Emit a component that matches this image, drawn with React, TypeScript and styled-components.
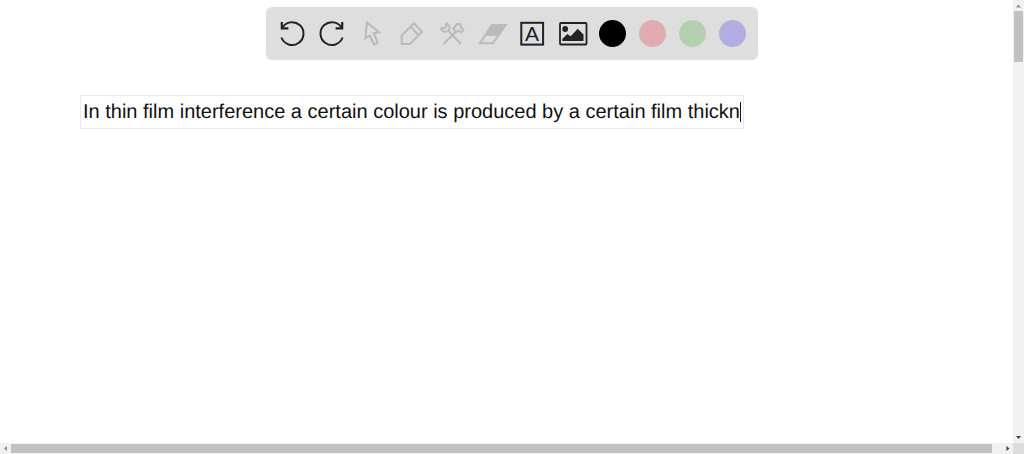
import React, { useState } from "react";
import styled, { createGlobalStyle } from "styled-components";

const GlobalStyle = createGlobalStyle`
  * { box-sizing: border-box; }
  body {
    margin: 0;
    background: #fff;
    font-family: "Liberation Sans", Arial, sans-serif;
    overflow: hidden;
  }
`;

const Page = styled.div`
  display: grid;
  grid-template-columns: minmax(0, 1fr) 11px;
  grid-template-rows: minmax(0, 1fr) 11px;
  height: 100vh;
`;

const Toolbar = styled.div`
  grid-area: 1 / 1 / 2 / 3;
  justify-self: center;
  align-self: start;
  z-index: 1;
  display: flex;
  margin-top: 7px;
  padding: 0 6px;
  border-radius: 6px;
  background: #dedede;
`;

const ToolButton = styled.button<{ $muted?: boolean }>`
  display: flex;
  align-items: center;
  justify-content: center;
  width: 40px;
  height: 53px;
  padding: 0;
  border: 0;
  background: none;
  color: ${(p) => (p.$muted ? "#bababa" : "#202224")};
  cursor: pointer;
`;

const Icon = styled.svg`
  display: block;
  width: 40px;
  height: 53px;
  fill: none;
  stroke: currentColor;
  stroke-width: 2;
`;

const Letter = styled.text`
  font: 21px "Liberation Sans", Arial, sans-serif;
  fill: currentColor;
  stroke: none;
  text-anchor: middle;
`;

const Swatch = styled.span<{ $color: string }>`
  width: 27px;
  height: 27px;
  border-radius: 50%;
  background: ${(p) => p.$color};
`;

const Canvas = styled.main`
  grid-area: 1 / 1 / 2 / 2;
  padding: 95px 0 0 80px;
  overflow: hidden;
`;

const TextBox = styled.label`
  display: inline-flex;
  align-items: center;
  height: 34px;
  padding: 0 2px;
  border: 1px solid #e9e9f4;
`;

const TextInput = styled.input`
  field-sizing: content;
  height: 32px;
  padding: 0;
  border: 0;
  outline: 0;
  background: none;
  color: #111;
  font: 20px/32px "Liberation Sans", Arial, sans-serif;
  text-rendering: geometricPrecision;
`;

const Caret = styled.span`
  width: 1px;
  height: 20px;
  background: #111;
`;

const Scrollbar = styled.div<{ $vertical?: boolean }>`
  grid-area: ${(p) => (p.$vertical ? "1 / 2 / 2 / 3" : "2 / 1 / 3 / 2")};
  display: flex;
  flex-direction: ${(p) => (p.$vertical ? "column" : "row")};
  background: #f1f1f1;
`;

const Track = styled.div<{ $vertical?: boolean }>`
  flex: 1;
  display: flex;
  flex-direction: ${(p) => (p.$vertical ? "column" : "row")};
  padding: ${(p) => (p.$vertical ? "0 1px" : "1px 0")};
`;

const Thumb = styled.div<{ $size: string }>`
  flex: 0 0 ${(p) => p.$size};
  background: #c1c1c1;
`;

const ArrowButton = styled.button`
  display: flex;
  width: 11px;
  height: 11px;
  padding: 0;
  border: 0;
  background: none;
`;

const Corner = styled.div`
  grid-area: 2 / 2 / 3 / 3;
  background: #dcdcdc;
`;

const arrows = {
  up: "M5.5 4.5L8 7.5H3Z",
  down: "M3 4h5L5.5 7Z",
  left: "M4 5.5L7 3v5Z",
  right: "M7.5 5.5L4.5 3v5Z",
};

function Arrow({ to, muted }: { to: keyof typeof arrows; muted?: boolean }) {
  return (
    <ArrowButton aria-label={`Scroll ${to}`}>
      <svg width="11" height="11" viewBox="0 0 11 11">
        <path d={arrows[to]} fill={muted ? "#8f8f8f" : "#404040"} />
      </svg>
    </ArrowButton>
  );
}

const tools: { name: string; muted?: boolean; art: React.ReactNode }[] = [
  {
    name: "Undo",
    art: (
      <>
        <path d="M10 21.3A11.4 11.4 0 1 1 9.4 30.5" />
        <path d="M9.8 15v6.3h6.6" strokeWidth="2.2" />
      </>
    ),
  },
  {
    name: "Redo",
    art: (
      <>
        <path d="M30 21.3A11.4 11.4 0 1 0 30.6 30.5" />
        <path d="M30.2 15v6.3h-6.6" strokeWidth="2.2" />
      </>
    ),
  },
  {
    name: "Select",
    muted: true,
    art: <path d="M15 15.5L27 25.2 21.8 26.3 25.7 35.8 22 37.5 17.7 28.5 13.3 31.5Z" />,
  },
  {
    name: "Pencil",
    muted: true,
    art: <path d="M9.7 37V28.5L22 16.3 30 24.7 18 37ZM18.5 19.7L26.5 28" />,
  },
  {
    name: "Tools",
    muted: true,
    art: (
      <>
        <path d="M13.5 16.2A4.3 4.3 0 1 1 9 20.5M9 20.5L12 21.5 14.5 19.5 13.5 16.2" />
        <path d="M16.5 24L29 37M23.5 25L11.5 37" />
        <path d="M21.3 21.5L25 17 28.5 17.3 28.8 20 31.5 23 29 25.5 26.5 23.5 24 25.3Z" />
      </>
    ),
  },
  {
    name: "Eraser",
    muted: true,
    art: (
      <>
        <path d="M8 36.3L20 18H33.5L21 36.3Z" />
        <path d="M14 28L20 18H33.5L26.6 28Z" fill="currentColor" />
      </>
    ),
  },
  {
    name: "Text",
    art: (
      <>
        <rect x="9.3" y="15.8" width="21.8" height="21.8" />
        <Letter x="20" y="34">A</Letter>
      </>
    ),
  },
  {
    name: "Image",
    art: (
      <>
        <rect x="8" y="16" width="26.5" height="21.5" rx="1" strokeWidth="1.8" />
        <circle cx="13.2" cy="22" r="2.9" fill="currentColor" stroke="none" />
        <path
          d="M10.3 34V32L15.3 27 18.7 29.3 25.7 21.7 31.5 27.5V34Z"
          fill="currentColor"
          stroke="none"
        />
      </>
    ),
  },
];

const colors = [
  { name: "Black", value: "#000000" },
  { name: "Red", value: "#e0abb1" },
  { name: "Green", value: "#b4d0b1" },
  { name: "Purple", value: "#b3aee2" },
];

export default function App() {
  const [text, setText] = useState(
    "In thin film interference a certain colour is produced by a certain film thickn"
  );
  return (
    <>
      <GlobalStyle />
      <Page>
        <Toolbar role="toolbar" aria-label="Drawing tools">
          {tools.map((tool) => (
            <ToolButton key={tool.name} aria-label={tool.name} $muted={tool.muted}>
              <Icon viewBox="0 0 40 53">{tool.art}</Icon>
            </ToolButton>
          ))}
          {colors.map((color) => (
            <ToolButton key={color.name} aria-label={color.name}>
              <Swatch $color={color.value} />
            </ToolButton>
          ))}
        </Toolbar>
        <Canvas>
          <TextBox>
            <TextInput
              aria-label="Canvas text"
              value={text}
              onChange={(e) => setText(e.target.value)}
            />
            <Caret />
          </TextBox>
        </Canvas>
        <Scrollbar $vertical>
          <Arrow to="up" muted />
          <Track $vertical>
            <Thumb $size="12%" />
          </Track>
          <Arrow to="down" />
        </Scrollbar>
        <Scrollbar>
          <Arrow to="left" muted />
          <Track>
            <Thumb $size="99%" />
          </Track>
          <Arrow to="right" />
        </Scrollbar>
        <Corner />
      </Page>
    </>
  );
}
